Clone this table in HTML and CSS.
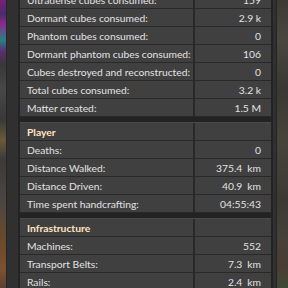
FILE: index.html
```html
<!DOCTYPE html>
<html>
<head>
<meta charset="utf-8">
<link rel="stylesheet" href="styles.css">
</head>
<body>
<div class="screen">
  <div class="world world-left"></div>
  <div class="frame">
    <div class="pane">
      <div class="section scrolled">
        <div class="row"><div class="label">Ultradense cubes consumed:</div><div class="value">159</div></div>
        <div class="row"><div class="label">Dormant cubes consumed:</div><div class="value">2.9 k</div></div>
        <div class="row"><div class="label">Phantom cubes consumed:</div><div class="value">0</div></div>
        <div class="row"><div class="label">Dormant phantom cubes consumed:</div><div class="value">106</div></div>
        <div class="row"><div class="label">Cubes destroyed and reconstructed:</div><div class="value">0</div></div>
        <div class="row"><div class="label">Total cubes consumed:</div><div class="value">3.2 k</div></div>
        <div class="row"><div class="label">Matter created:</div><div class="value">1.5 M</div></div>
      </div>
      <div class="section">
        <div class="row"><div class="label header">Player</div><div class="value"></div></div>
        <div class="row"><div class="label">Deaths:</div><div class="value">0</div></div>
        <div class="row"><div class="label">Distance Walked:</div><div class="value">375.4<span class="unit">km</span></div></div>
        <div class="row"><div class="label">Distance Driven:</div><div class="value">40.9<span class="unit">km</span></div></div>
        <div class="row"><div class="label">Time spent handcrafting:</div><div class="value">04:55:43</div></div>
      </div>
      <div class="section">
        <div class="row"><div class="label header">Infrastructure</div><div class="value"></div></div>
        <div class="row"><div class="label">Machines:</div><div class="value">552</div></div>
        <div class="row"><div class="label">Transport Belts:</div><div class="value">7.3<span class="unit">km</span></div></div>
        <div class="row"><div class="label">Rails:</div><div class="value">2.4<span class="unit">km</span></div></div>
      </div>
    </div>
  </div>
  <div class="world world-right"></div>
</div>
</body>
</html>
```

FILE: styles.css
```css
* { box-sizing: border-box; }
html, body { margin: 0; padding: 0; }
body {
  width: 288px;
  height: 288px;
  overflow: hidden;
  background: #2c2b29;
  font-family: Lato, "Open Sans", sans-serif;
  font-size: 10.3px;
}
.screen {
  display: flex;
  width: 288px;
  height: 288px;
  overflow: hidden;
}
.world-left {
  width: 6px;
  flex: none;
  background:
    linear-gradient(180deg,
      #7a1f7c 0px, #4a2a6a 14px, #8b2a8e 24px, #2a7f86 40px, #5a2b70 52px,
      #3a3837 64px, #4a4846 90px, #3b3937 120px, #6a5a3a 140px, #3c3a38 160px,
      #4a4644 200px, #6a4a2a 240px, #7a5230 270px, #5a4030 288px);
}
.world-right {
  width: 11px;
  flex: none;
  background:
    linear-gradient(180deg,
      #3d3a35 0px, #4a4640 40px, #3a3833 90px, #48443c 140px, #3c3934 200px,
      #45413a 240px, #4a3c34 265px, #3f4a36 288px);
}
.frame {
  width: 271px;
  flex: none;
  background: #313031;
  padding: 0 4px 0 12px;
  box-shadow: inset 1px 0 0 #262526, inset -1px 0 0 #262526;
}
.pane {
  height: 288px;
  overflow: hidden;
  background: #242324;
  padding: 0 2px;
  display: flex;
  flex-direction: column;
}
.section {
  display: flex;
  flex-direction: column;
  background: #2a292a;
  border-top: 1px solid #4a494a;
  margin-top: 5px;
}
.section.scrolled {
  margin-top: -9px;
  border-top: 0;
}
.row {
  display: flex;
  height: 18px;
  gap: 2px;
  border-bottom: 1px solid #2a292a;
  flex: none;
}
.label, .value {
  background: #414041;
  color: #e2e2e2;
  line-height: 18px;
  white-space: nowrap;
  overflow: hidden;
}
.label {
  flex: 1;
  padding-left: 7px;
}
.value {
  width: 76px;
  flex: none;
  text-align: right;
  padding-right: 10px;
}
.header {
  font-weight: bold;
  color: #ffe6c0;
}
.unit {
  margin-left: 5px;
}
```
